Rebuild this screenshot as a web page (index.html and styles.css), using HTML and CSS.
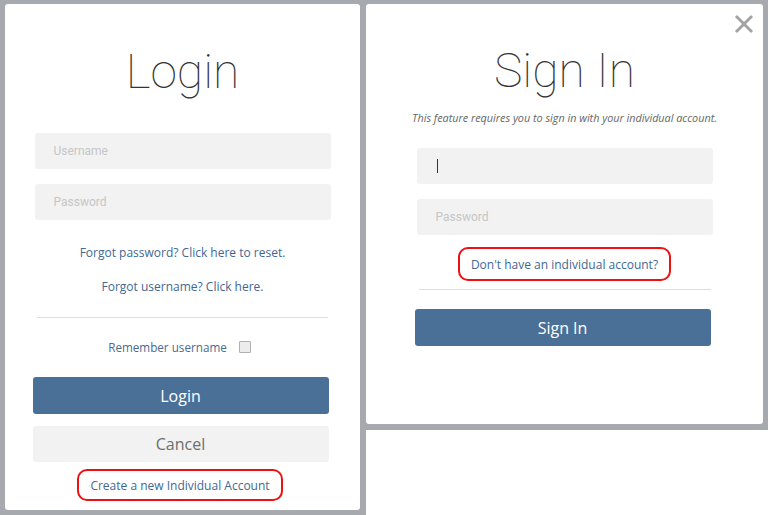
FILE: index.html
```html
<!DOCTYPE html>
<html>
<head>
<meta charset="utf-8">
<link rel="stylesheet" href="styles.css">
</head>
<body>
<div class="page">
  <section class="panel login">
    <h1 class="title">Login</h1>
    <div class="field">Username</div>
    <div class="field gap">Password</div>
    <a class="link first">Forgot password? Click here to reset.</a>
    <a class="link second">Forgot username? Click here.</a>
    <hr class="rule">
    <label class="remember">Remember username <span class="check"></span></label>
    <div class="btn primary">Login</div>
    <div class="btn secondary">Cancel</div>
    <div class="callout create">Create a new Individual Account</div>
  </section>
  <div class="rightcol">
    <section class="panel signin">
      <svg class="close" width="20" height="20" viewBox="0 0 20 20"><path d="M2 2 L18 18 M18 2 L2 18" stroke="#a3a3a3" stroke-width="3" fill="none"/></svg>
      <h1 class="title">Sign In</h1>
      <p class="note">This feature requires you to sign in with your individual account.</p>
      <div class="field s"><span class="caret"></span></div>
      <div class="field s gap">Password</div>
      <div class="callout dont">Don't have an individual account?</div>
      <hr class="rule s">
      <div class="btn primary s">Sign In</div>
    </section>
    <div class="blank"></div>
  </div>
</div>
</body>
</html>
```
FILE: styles.css
```css
html, body {
  margin: 0;
  padding: 0;
}
body {
  width: 768px;
  height: 515px;
  overflow: hidden;
  background: #a6aaae;
  font-family: "Open Sans", "Noto Sans", sans-serif;
}
.page {
  display: flex;
  height: 515px;
  padding: 4px 0 0 5px;
  box-sizing: border-box;
  gap: 6px;
}
.panel {
  background: #fff;
  border-radius: 3px;
  box-sizing: border-box;
  display: flex;
  flex-direction: column;
  align-items: center;
  position: relative;
}
.login {
  width: 355px;
  height: 506px;
  padding-top: 40px;
}
.rightcol {
  flex: 1;
  display: flex;
  flex-direction: column;
  gap: 6px;
}
.signin {
  width: 397px;
  height: 420px;
  padding-top: 39px;
}
.blank {
  flex: 1;
  background: #fff;
}
.title {
  margin: 0;
  font-family: Roboto, sans-serif;
  font-weight: 100;
  font-size: 48px;
  line-height: 56px;
  color: #333;
}
.field {
  width: 296px;
  height: 36px;
  box-sizing: border-box;
  background: #f2f2f2;
  border-radius: 3px;
  font-family: Roboto, sans-serif;
  font-size: 12px;
  color: #c6c6c6;
  padding-left: 19px;
  display: flex;
  align-items: center;
  margin-top: 33px;
}
.field.gap {
  margin-top: 15px;
}
.field.s {
  margin-top: 22px;
  padding-left: 19px;
}
.field.s.gap {
  margin-top: 15px;
}
.caret {
  width: 1px;
  height: 14px;
  background: #333;
  margin-left: 1px;
}
.link {
  display: block;
  font-size: 12px;
  line-height: 20px;
  color: #3f6793;
  text-align: center;
}
.link.first { margin-top: 23px; }
.link.second { margin-top: 14px; }
.rule {
  width: 291px;
  margin: 20px 0 0;
  border: 0;
  border-top: 1px solid #dedede;
  height: 0;
}
.rule.s {
  width: 292px;
  margin-top: 8px;
}
.remember {
  margin-top: 19px;
  height: 20px;
  display: flex;
  align-items: center;
  gap: 12px;
  font-size: 11.7px;
  color: #4a6a90;
  margin-left: -6px;
}
.check {
  width: 12px;
  height: 12px;
  box-sizing: border-box;
  border: 1px solid #b0b0b0;
  background: #ececec;
  border-radius: 1px;
}
.btn {
  width: 296px;
  height: 37px;
  box-sizing: border-box;
  border-radius: 3px;
  display: flex;
  align-items: center;
  justify-content: center;
  font-size: 16px;
  margin-left: -2px;
  margin-right: 2px;
}
.primary {
  background: #4b7098;
  color: #fff;
  margin-top: 20px;
}
.primary.s {
  margin-top: 19px;
}
.secondary {
  background: #f2f2f2;
  color: #6e6e6e;
  height: 36px;
  margin-top: 12px;
}
.callout {
  border: 2px solid #ee1111;
  border-radius: 10px;
  box-sizing: border-box;
  display: flex;
  align-items: center;
  justify-content: center;
  font-size: 12px;
  color: #3f6793;
}
.create {
  width: 206px;
  height: 32px;
  margin-top: 7px;
  margin-left: -5px;
}
.dont {
  width: 213px;
  height: 34px;
  margin-top: 12px;
}
.note {
  margin: 11px 0 0;
  font-size: 10.8px;
  line-height: 16px;
  font-style: italic;
  color: #666;
}
.close {
  position: absolute;
  top: 10px;
  right: 9px;
}
```
